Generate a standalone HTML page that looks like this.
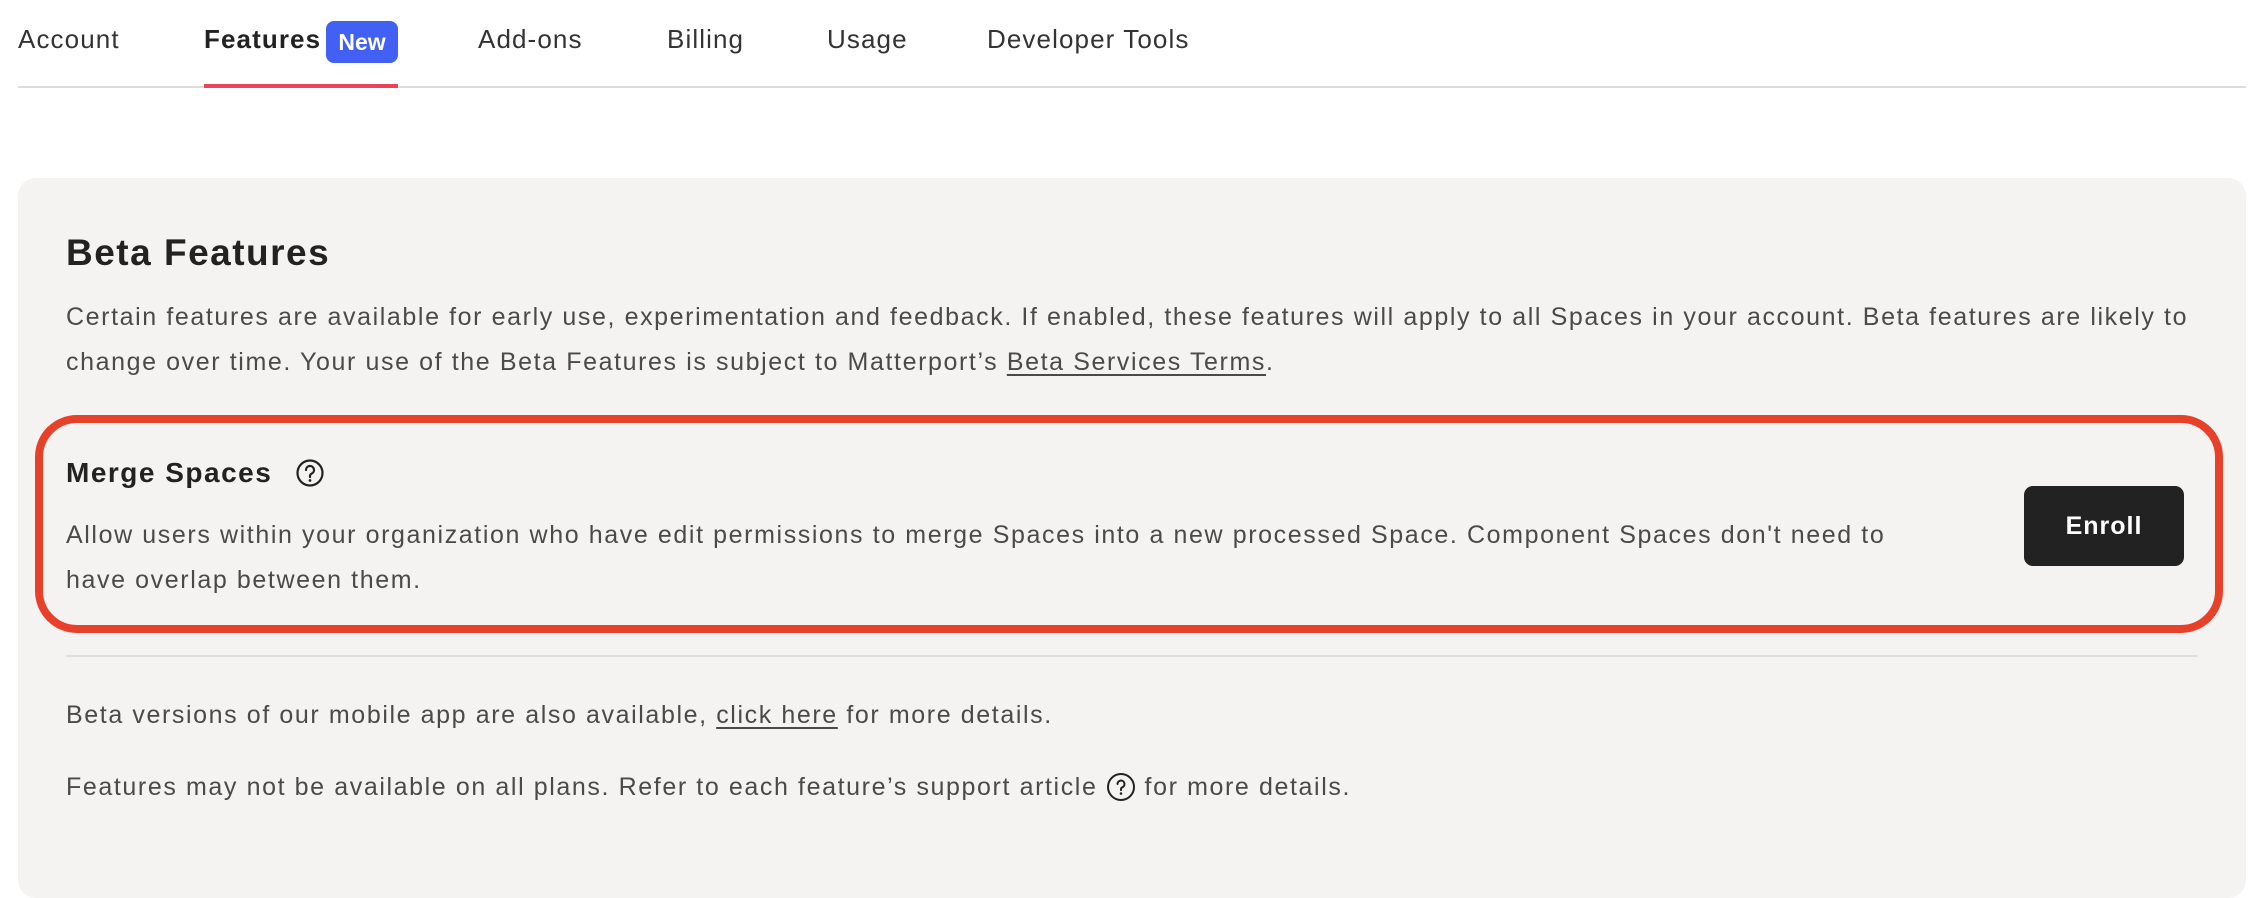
<!DOCTYPE html>
<html><head><meta charset="utf-8"><style>
*{margin:0;padding:0;box-sizing:border-box}
body{width:2260px;height:870px;background:#fff;font-family:"Liberation Sans",sans-serif;color:#222;position:relative;overflow:hidden}
.abs{position:absolute;white-space:nowrap}
.tab{position:absolute;top:22px;font-size:26px;color:#333;line-height:34px;letter-spacing:1.1px}
.p{font-size:25px;color:#4a4a4a;line-height:30px;letter-spacing:1.6px}
u{text-decoration:underline;text-underline-offset:4px}
</style></head><body>
<div class="tab" style="left:18px">Account</div>
<div class="tab" style="left:204px;font-weight:bold;color:#222">Features</div>
<div class="abs" style="left:326px;top:21px;width:72px;height:42px;background:#4360f5;border-radius:8px;color:#fff;font-weight:bold;font-size:23px;line-height:42px;text-align:center">New</div>
<div class="tab" style="left:478px">Add-ons</div>
<div class="tab" style="left:667px">Billing</div>
<div class="tab" style="left:827px">Usage</div>
<div class="tab" style="left:987px">Developer Tools</div>
<div class="abs" style="left:18px;top:86px;width:2228px;height:2px;background:#ddd"></div>
<div class="abs" style="left:204px;top:84px;width:194px;height:4px;background:#e8435a"></div>

<div class="abs" style="left:18px;top:178px;width:2228px;height:720px;background:#f4f3f2;border-radius:18px"></div>
<div class="abs" style="left:66px;top:232px;font-size:37px;font-weight:bold;color:#222;letter-spacing:1.5px">Beta Features</div>
<div class="abs p" style="left:66px;top:302px">Certain features are available for early use, experimentation and feedback. If enabled, these features will apply to all Spaces in your account. Beta features are likely to</div>
<div class="abs p" style="left:66px;top:347px">change over time. Your use of the Beta Features is subject to Matterport’s <u>Beta Services Terms</u>.</div>

<div class="abs" style="left:35px;top:415px;width:2188px;height:218px;border:8px solid #e8412a;border-radius:42px"></div>
<div class="abs" style="left:66px;top:457px;font-size:28px;font-weight:bold;color:#222;letter-spacing:1.5px">Merge Spaces</div>
<svg class="abs" style="left:295px;top:458px" width="30" height="30" viewBox="0 0 30 30"><circle cx="15" cy="15" r="12.5" fill="none" stroke="#222" stroke-width="2.2"/><path d="M11 12a4 4 0 1 1 5.5 3.7c-1 .5-1.5 1.2-1.5 2.3v1" fill="none" stroke="#222" stroke-width="2.2" stroke-linecap="round"/><circle cx="15" cy="22.5" r="1.4" fill="#222"/></svg>
<div class="abs p" style="left:66px;top:520px">Allow users within your organization who have edit permissions to merge Spaces into a new processed Space. Component Spaces don't need to</div>
<div class="abs p" style="left:66px;top:565px">have overlap between them.</div>
<div class="abs" style="left:2024px;top:486px;width:160px;height:80px;background:#222;border-radius:9px;color:#fff;font-weight:bold;font-size:25px;letter-spacing:1px;line-height:80px;text-align:center">Enroll</div>

<div class="abs" style="left:66px;top:655px;width:2131px;height:2px;background:#ddd"></div>
<div class="abs p" style="left:66px;top:700px">Beta versions of our mobile app are also available, <u>click here</u> for more details.</div>
<div class="abs p" style="left:66px;top:772px">Features may not be available on all plans. Refer to each feature’s support article <svg style="vertical-align:-7px" width="30" height="30" viewBox="0 0 30 30"><circle cx="15" cy="15" r="13" fill="none" stroke="#222" stroke-width="2"/><path d="M11.5 12a3.5 3.5 0 1 1 4.8 3.3c-.9.4-1.3 1-1.3 2v.8" fill="none" stroke="#222" stroke-width="2" stroke-linecap="round"/><circle cx="15" cy="21.5" r="1.3" fill="#222"/></svg> for more details.</div>
</body></html>
